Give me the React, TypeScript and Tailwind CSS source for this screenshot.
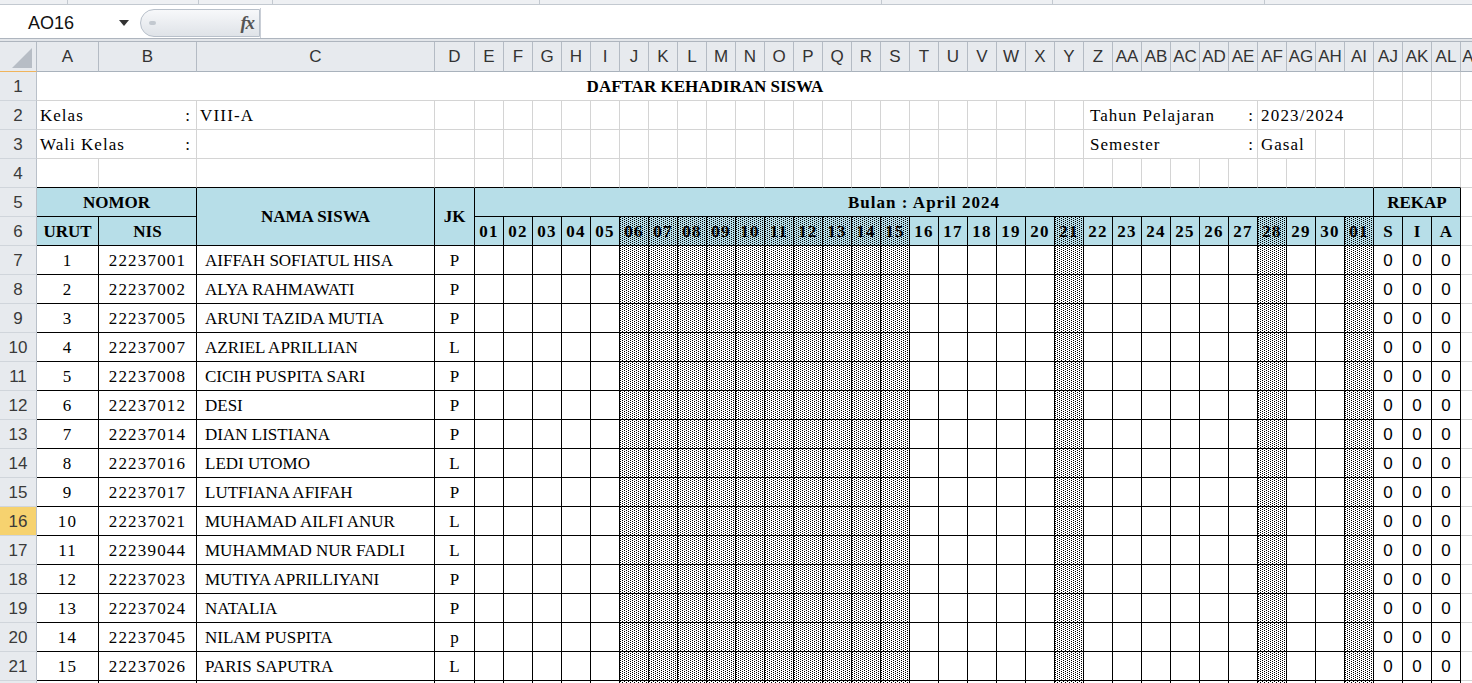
import React from 'react';

const SANS = "font-[family-name:'Liberation_Sans',Arial,sans-serif]";
const SERIF = "font-[family-name:'Liberation_Serif','Times_New_Roman',serif]";

const letters = [
  ...'ABCDEFGHIJKLMNOPQRSTUVWXYZ'.split(''),
  ...'ABCDEFGHIJKLM'.split('').map((c) => 'A' + c),
];

const days = [...Array.from({ length: 30 }, (_, i) => String(i + 1).padStart(2, '0')), '01'];
const shaded = new Set([5, 6, 7, 8, 9, 10, 11, 12, 13, 14, 20, 27, 30]);

const students = [
  ['22237001', 'AIFFAH SOFIATUL HISA', 'P'],
  ['22237002', 'ALYA RAHMAWATI', 'P'],
  ['22237005', 'ARUNI TAZIDA MUTIA', 'P'],
  ['22237007', 'AZRIEL APRILLIAN', 'L'],
  ['22237008', 'CICIH PUSPITA SARI', 'P'],
  ['22237012', 'DESI', 'P'],
  ['22237014', 'DIAN LISTIANA', 'P'],
  ['22237016', 'LEDI UTOMO', 'L'],
  ['22237017', 'LUTFIANA AFIFAH', 'P'],
  ['22237021', 'MUHAMAD AILFI ANUR', 'L'],
  ['22239044', 'MUHAMMAD NUR FADLI', 'L'],
  ['22237023', 'MUTIYA APRILLIYANI', 'P'],
  ['22237024', 'NATALIA', 'P'],
  ['22237045', 'NILAM PUSPITA', 'p'],
  ['22237026', 'PARIS SAPUTRA', 'L'],
];

const GRID = 'border-r border-b border-[#d4d4d4]';
const BLK = 'border-r border-b border-black';
const DOTS =
  'bg-[image:conic-gradient(at_1px_1px,transparent_75%,#000_0),conic-gradient(at_1px_1px,transparent_75%,#000_0)] bg-[length:4px_2px] bg-[position:0_0,2px_1px]';
const BLUE = 'bg-[#b7dee8]';
const CENTER = 'flex items-center justify-center';
const NUM = 'tracking-[0.07em]';
const LOWER = 'tracking-[0.06em]';

function RowHead({ n, active }: { n: number; active?: boolean }) {
  return (
    <div
      className={`${CENTER} border-r border-b border-r-[#b9c0c9] border-b-[#d0d5db] ${
        active ? 'bg-[#f6d26f]' : 'bg-[#e7eaee]'
      } ${SANS} text-[17px] text-[#3a3a3a]`}
    >
      {n}
    </div>
  );
}

function TopStrip() {
  const widths = ['w-[68px]', 'w-[131px]', 'w-[74px]', 'w-[267px]', 'w-[342px]', 'w-[171px]', 'w-[212px]'];
  return (
    <div className="h-[5px] bg-[#eef0f3] border-b border-[#c3c9d0] flex">
      {widths.map((w) => (
        <div key={w} className={`${w} h-full border-r border-[#c3c9d0]`} />
      ))}
    </div>
  );
}

function FormulaBar() {
  return (
    <div className="h-[33px] bg-white flex items-center pt-[3px]">
      <div className="w-[138px] h-full flex items-center pl-[28px] pr-[9px]">
        <span className={`${SANS} text-[18px] text-[#111] flex-1`}>AO16</span>
        <svg width="10" height="6" viewBox="0 0 10 6">
          <polygon points="0,0 10,0 5,6" fill="#333" />
        </svg>
      </div>
      <div className="w-[120px] h-[28px] ml-[2px] rounded-l-full border border-[#b8c0ca] bg-[linear-gradient(#f7f8fa,#dfe3e8)] flex items-center justify-between">
        <div className="ml-[8px] w-[7px] h-[4px] rounded-full bg-[#c3c9d0]" />
        <span className={`${SERIF} italic text-[19px] text-[#555] mr-[5px] font-bold tracking-[-0.06em]`}>fx</span>
      </div>
      <div className="flex-1 h-full border-l border-[#c9ced6]" />
    </div>
  );
}

export default function App() {
  const cells: React.ReactNode[] = [];
  let k = 0;
  const push = (node: React.ReactElement) => cells.push(React.cloneElement(node, { key: k++ }));

  // column header row
  push(
    <div className="relative bg-[#e7eaee] border-r border-b border-r-[#b4bbc4] border-b-[#f0b45c]">
      <svg className="absolute right-[4px] bottom-[3px]" width="20" height="20" viewBox="0 0 20 20">
        <polygon points="20,0 20,20 0,20" fill="#b7bdc5" />
      </svg>
    </div>
  );
  letters.forEach((l) =>
    push(
      <div
        className={`${CENTER} bg-[#e7eaee] border-r border-b border-r-[#b4bbc4] border-b-[#a9b2bc] ${SANS} text-[17px] text-[#333] overflow-hidden whitespace-nowrap`}
      >
        {l}
      </div>
    )
  );

  // row 1
  push(<RowHead n={1} />);
  push(<div className={`col-span-35 ${CENTER} ${GRID} font-bold text-[17px]`}>DAFTAR KEHADIRAN SISWA</div>);
  for (let i = 0; i < 4; i++) push(<div className={GRID} />);

  // rows 2 & 3
  const info: [string, string, string, string][] = [
    ['Kelas', 'VIII-A', 'Tahun Pelajaran', '2023/2024'],
    ['Wali Kelas', '', 'Semester', 'Gasal'],
  ];
  info.forEach(([l1, v1, l2, v2], idx) => {
    push(<RowHead n={idx + 2} />);
    push(
      <div className={`col-span-2 ${GRID} flex items-center justify-between pl-[3px] pr-[5px] text-[17px] ${LOWER}`}>
        <span>{l1}</span>
        <span>:</span>
      </div>
    );
    push(<div className={`${GRID} flex items-center pl-[3px] text-[17px] ${NUM}`}>{v1}</div>);
    push(<div className={GRID} />);
    for (let i = 0; i < 21; i++) push(<div className={GRID} />);
    push(
      <div className={`col-span-6 ${GRID} flex items-center justify-between pl-[6px] pr-[3px] text-[17px] ${LOWER}`}>
        <span>{l2}</span>
        <span>:</span>
      </div>
    );
    if (idx === 0) {
      push(<div className={`col-span-4 ${GRID} flex items-center pl-[3px] text-[17px] ${NUM}`}>{v2}</div>);
    } else {
      push(<div className={`col-span-2 ${GRID} flex items-center pl-[3px] text-[17px] ${LOWER}`}>{v2}</div>);
      push(<div className={GRID} />);
      push(<div className={GRID} />);
    }
    for (let i = 0; i < 4; i++) push(<div className={GRID} />);
  });

  // row 4
  push(<RowHead n={4} />);
  for (let i = 0; i < 38; i++) push(<div className="border-r border-b border-r-[#d4d4d4] border-b-black" />);
  push(<div className={GRID} />);

  // row 5
  const head = `${BLK} ${BLUE} ${CENTER} font-bold text-[17px]`;
  push(<RowHead n={5} />);
  push(<div className={`col-span-2 ${head}`}>NOMOR</div>);
  push(<div className={`row-span-2 ${head}`}>NAMA SISWA</div>);
  push(<div className={`row-span-2 ${head}`}>JK</div>);
  push(<div className={`col-span-31 ${head} ${LOWER}`}>Bulan : April 2024</div>);
  push(<div className={`col-span-3 ${head}`}>REKAP</div>);
  push(<div className={GRID} />);

  // row 6
  push(<RowHead n={6} />);
  push(<div className={head}>URUT</div>);
  push(<div className={head}>NIS</div>);
  days.forEach((d, i) =>
    push(<div className={`${head} ${NUM} ${shaded.has(i) ? DOTS : ''}`}>{d}</div>)
  );
  ['S', 'I', 'A'].forEach((s) => push(<div className={head}>{s}</div>));
  push(<div className={GRID} />);

  // data rows
  students.forEach(([nis, name, jk], i) => {
    const rowNo = i + 7;
    push(<RowHead n={rowNo} active={rowNo === 16} />);
    push(<div className={`${BLK} ${CENTER} text-[17px] ${NUM}`}>{i + 1}</div>);
    push(<div className={`${BLK} ${CENTER} text-[17px] ${NUM}`}>{nis}</div>);
    push(<div className={`${BLK} flex items-center pl-[8px] text-[17px] whitespace-nowrap`}>{name}</div>);
    push(<div className={`${BLK} ${CENTER} text-[17px]`}>{jk}</div>);
    days.forEach((_, d) => push(<div className={`${BLK} ${shaded.has(d) ? DOTS : ''}`} />));
    for (let r = 0; r < 3; r++)
      push(<div className={`${BLK} ${CENTER} ${SANS} text-[17px]`}>0</div>);
    push(<div className={GRID} />);
  });

  // row 22 (cut off)
  push(<RowHead n={22} />);
  for (let i = 0; i < 4; i++) push(<div className={BLK} />);
  days.forEach((_, d) => push(<div className={`${BLK} ${shaded.has(d) ? DOTS : ''}`} />));
  for (let r = 0; r < 3; r++) push(<div className={BLK} />);
  push(<div className={GRID} />);

  return (
    <div className={`w-[1472px] h-[683px] overflow-hidden bg-white text-black ${SERIF}`}>
      <TopStrip />
      <FormulaBar />
      <div className="h-[4px] border-t border-b border-[#aeb5be] bg-[#e3e6ea]" />
      <div className="grid grid-cols-[37px_62px_98px_238px_40px_repeat(35,29px)] grid-rows-[30px_repeat(22,29px)] leading-none">
        {cells}
      </div>
    </div>
  );
}
